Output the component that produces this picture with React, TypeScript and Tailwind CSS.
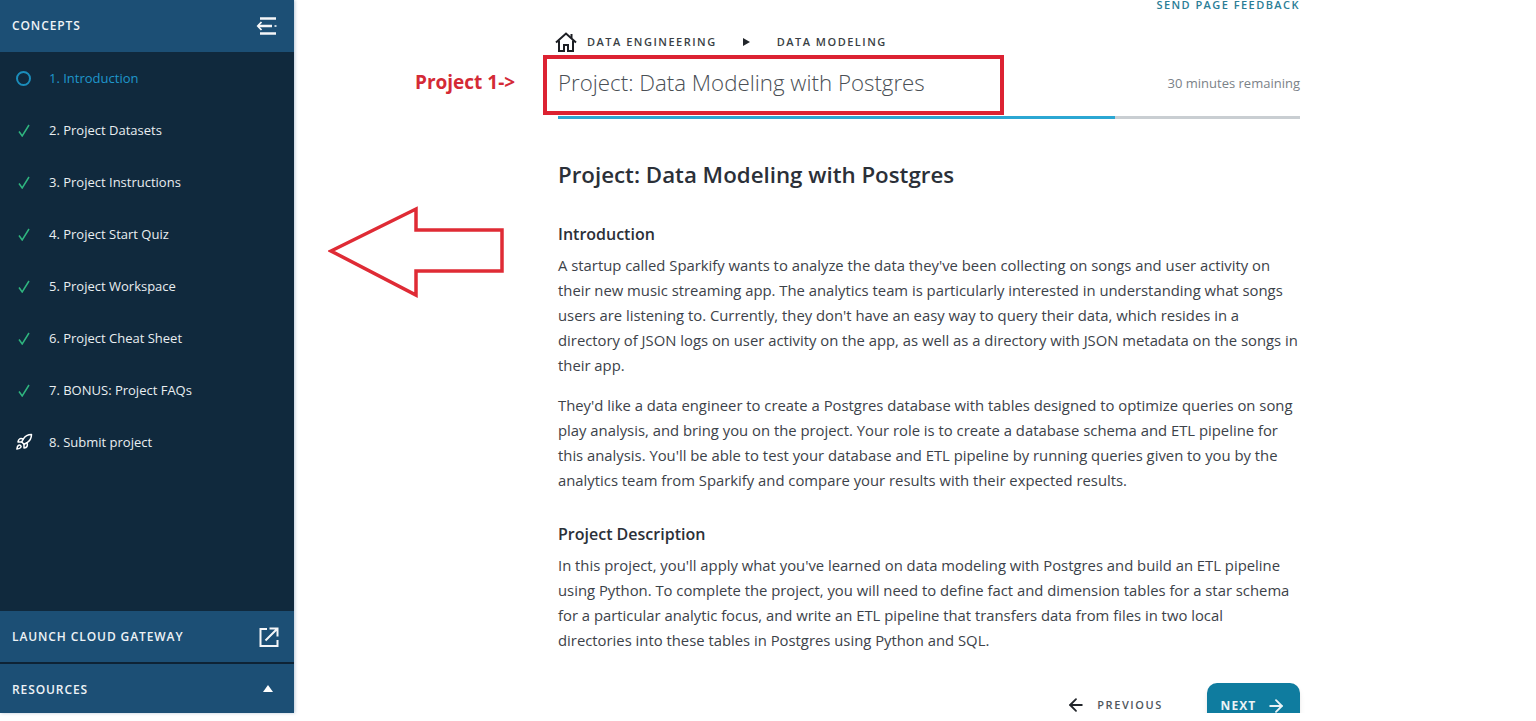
import { ArrowLeft, ArrowRight, Rocket } from "lucide-react";

const concepts = [
  "2. Project Datasets",
  "3. Project Instructions",
  "4. Project Start Quiz",
  "5. Project Workspace",
  "6. Project Cheat Sheet",
  "7. BONUS: Project FAQs",
];

const Sidebar = () => {
  return (
    <aside className="flex h-[713px] w-[294px] shrink-0 flex-col bg-[#10293d] shadow-[1px_0_3px_rgba(120,150,180,0.5)]">
      <div className="flex h-[52px] items-center justify-between bg-[#1c4f75] pl-3 pr-[17px]">
        <span className="text-[12px] font-semibold tracking-[0.9px] text-[#eef3f6]">CONCEPTS</span>
        <svg width="21" height="18" viewBox="0 0 21 18" fill="none" stroke="#f4f6f8" strokeWidth="2.3">
          <path d="M4 1.5h16M2 9h14M4 16.5h16" />
          <path d="M5.5 5 1.8 9l3.7 4" strokeWidth="1.8" />
          <path d="M18.5 9h2" strokeWidth="1.6" />
        </svg>
      </div>
      <div className="flex h-[52px] items-center text-[#1f97cc]">
        <div className="ml-4 mr-[18px] h-[15px] w-[15px] rounded-full border-2 border-[#1b8dbb]"></div>
        <span className="pt-[2px] text-[13px]">1. Introduction</span>
      </div>
      {concepts.map((item) => (
        <div key={item} className="flex h-[52px] items-center text-[#e9eef1]">
          <svg width="12" height="13" viewBox="0 0 12 13" fill="none" stroke="#2fb57f" strokeWidth="1.5" className="ml-[18px] mr-[19px]">
            <path d="M1 7.5 4.2 12 11 1" />
          </svg>
          <span className="pt-[2px] text-[13px]">{item}</span>
        </div>
      ))}
      <div className="flex h-[52px] items-center text-[#e9eef1]">
        <Rocket size={18} strokeWidth={2} className="ml-[15px] mr-4 text-white" />
        <span className="pt-[2px] text-[13px]">8. Submit project</span>
      </div>
      <div className="mt-auto flex h-[53px] items-center justify-between border-b-2 border-[#0e2335] bg-[#1c4f75] pl-3 pr-[15px]">
        <span className="text-[12px] font-semibold tracking-[0.9px] text-[#eef3f6]">LAUNCH CLOUD GATEWAY</span>
        <svg width="20" height="20" viewBox="0 0 20 20" fill="none" stroke="#f4f6f8" strokeWidth="2">
          <path d="M8 2H1.5v17h17v-6" />
          <path d="M6.5 13.5 18 2M10.5 1.5h8v8" />
        </svg>
      </div>
      <div className="flex h-[49px] items-center justify-between bg-[#1c4f75] pl-3 pr-[21px]">
        <span className="pt-[2px] text-[12px] font-semibold tracking-[0.9px] text-[#eef3f6]">RESOURCES</span>
        <div className="h-0 w-0 border-x-[5px] border-b-[7px] border-x-transparent border-b-white"></div>
      </div>
    </aside>
  );
};

const App = () => {
  return (
    <div className="flex h-[721px] overflow-hidden bg-white font-['Open_Sans',sans-serif]">
      <Sidebar />
      <main className="relative h-[713px] flex-1 overflow-hidden">
        {/* annotations pasted on top of the page */}
        <span className="absolute left-[121px] top-[70px] text-[19px] font-bold leading-6 text-[#d42a36]">Project 1-&gt;</span>
        <div className="absolute left-[249px] top-[55px] h-[60px] w-[461px] border-[4px] border-[#dc2232]"></div>
        <svg className="absolute left-[34px] top-[205px]" width="176" height="94" viewBox="0 0 176 94" fill="none" stroke="#df2b35" strokeWidth="3.5">
          <path d="M3 46 88 4v21h86v41H88v24z" />
        </svg>

        <div className="ml-[264px] w-[742px]">
          <div className="text-right text-[11px] font-semibold leading-[10px] tracking-[1.45px] text-[#2a7d96]">SEND PAGE FEEDBACK</div>
          <div className="-ml-[3px] mt-5 flex h-6 items-center">
            <svg width="22" height="20" viewBox="0 0 22 20" fill="none" stroke="#1d1f24" strokeWidth="2">
              <path d="M1 10.5 11 1.5l10 9" />
              <path d="M16.5 2v4" />
              <path d="M4 8.5V19h5v-6h4v6h5V8.5" />
            </svg>
            <span className="ml-[10px] text-[11px] font-semibold tracking-[1.5px] text-[#3a3f45]">DATA ENGINEERING</span>
            <div className="ml-[26px] h-0 w-0 border-y-[4px] border-l-[7px] border-y-transparent border-l-[#22262b]"></div>
            <span className="ml-[27px] text-[11px] font-semibold tracking-[1.5px] text-[#3a3f45]">DATA MODELING</span>
          </div>
          <div className="mt-3 flex h-[32px] items-center justify-between">
            <h1 className="pt-[2px] text-[22.3px] font-light text-[#4a4f55]">Project: Data Modeling with Postgres</h1>
            <span className="pt-1 text-[13px] text-[#7b8288]">30 minutes remaining</span>
          </div>
          <div className="mt-[18px] flex h-[3px] bg-[#c9ced2]">
            <div className="w-[75%] bg-[#2ba7d3]"></div>
          </div>

          <h2 className="mt-10 text-[22.3px] font-semibold leading-8 text-[#2b3038]">Project: Data Modeling with Postgres</h2>
          <h3 className="mt-[31px] text-[16px] font-semibold leading-6 text-[#2b3038]">Introduction</h3>
          <p className="mt-[7px] text-[14.83px] leading-[25px] text-[#3c4249]">
            A startup called Sparkify wants to analyze the data they've been collecting on songs and user activity on their new music streaming app. The analytics team is particularly interested in understanding what songs users are listening to. Currently, they don't have an easy way to query their data, which resides in a directory of JSON logs on user activity on the app, as well as a directory with JSON metadata on the songs in their app.
          </p>
          <p className="mt-[15px] text-[14.83px] leading-[25px] text-[#3c4249]">
            They'd like a data engineer to create a Postgres database with tables designed to optimize queries on song play analysis, and bring you on the project. Your role is to create a database schema and ETL pipeline for this analysis. You'll be able to test your database and ETL pipeline by running queries given to you by the analytics team from Sparkify and compare your results with their expected results.
          </p>
          <h3 className="mt-[29px] text-[16px] font-semibold leading-6 text-[#2b3038]">Project Description</h3>
          <p className="mt-[7px] text-[14.83px] leading-[25px] text-[#3c4249]">
            In this project, you'll apply what you've learned on data modeling with Postgres and build an ETL pipeline using Python. To complete the project, you will need to define fact and dimension tables for a star schema for a particular analytic focus, and write an ETL pipeline that transfers data from files in two local directories into these tables in Postgres using Python and SQL.
          </p>
          <div className="mt-[30px] flex items-start justify-end">
            <div className="mt-3 flex items-center">
              <ArrowLeft size={20} strokeWidth={2.2} className="text-[#22262b]" />
              <span className="ml-[11px] text-[11px] font-semibold tracking-[1.6px] text-[#50565c]">PREVIOUS</span>
            </div>
            <div className="ml-[44px] flex h-12 w-[93px] items-start justify-center gap-[10px] rounded-[10px] bg-[#0f7c9f] pt-[13px] shadow-md">
              <span className="pt-[1px] text-[12px] font-bold tracking-[1.1px] text-[#eaf3f6]">NEXT</span>
              <ArrowRight size={20} strokeWidth={2.2} className="text-[#eaf3f6]" />
            </div>
          </div>
        </div>
      </main>
    </div>
  );
};

export default App;
